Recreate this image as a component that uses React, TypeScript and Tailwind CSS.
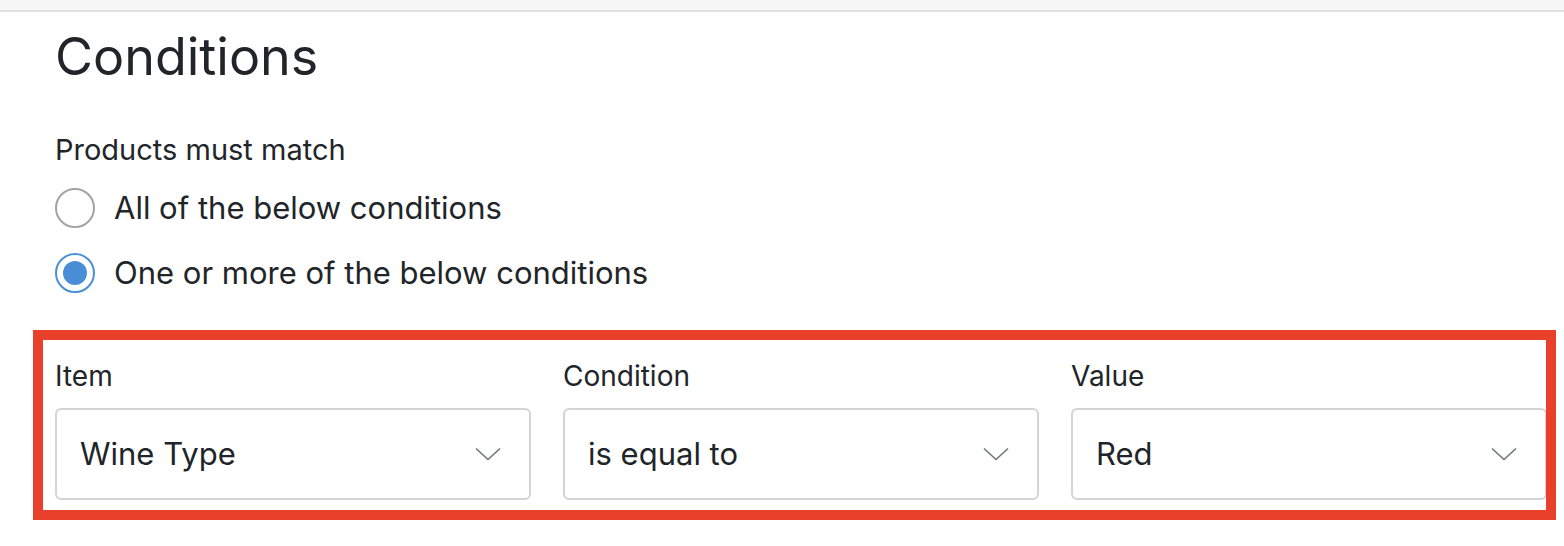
import React from 'react'

const font = { fontFamily: 'Inter, "Noto Sans", sans-serif' }

function Chevron() {
  return (
    <svg width="26" height="14" viewBox="0 0 26 14" fill="none" className="shrink-0">
      <path d="M1 1.5l12 11 12-11" stroke="#6f757b" strokeWidth="1.6" />
    </svg>
  )
}

function Select({ label, value }: { label: string; value: string }) {
  return (
    <div className="flex flex-col">
      <label className="text-[28px] leading-[34px] text-[#212529] mb-[15px]">{label}</label>
      <div className="h-[92px] border-2 border-[#d4d4d4] rounded-[6px] flex items-center justify-between pl-[23px] pr-[28px] bg-white">
        <span className="text-[31px] text-[#212529]">{value}</span>
        <Chevron />
      </div>
    </div>
  )
}

function Radio({ checked, label }: { checked?: boolean; label: string }) {
  return (
    <div className="flex items-center gap-[19px] h-[40px]">
      {checked ? (
        <span className="w-[40px] h-[40px] rounded-full border-2 border-[#4a8fd6] flex items-center justify-center">
          <span className="w-[24px] h-[24px] rounded-full bg-[#4a8fd6]" />
        </span>
      ) : (
        <span className="w-[40px] h-[40px] rounded-full border-2 border-[#a3a3a3]" />
      )}
      <span className="text-[31px] text-[#212529]">{label}</span>
    </div>
  )
}

export default function App() {
  return (
    <div className="min-h-screen bg-white relative" style={font}>
      <div className="h-[12px] bg-[#f7f7f7] border-b-2 border-[#e0e0e0]" />

      <div className="pl-[55px] pr-[17px]">
        <h1 className="text-[52px] leading-none text-[#212529] mt-[19px]">Conditions</h1>

        <p className="text-[29px] leading-[34px] text-[#212529] mt-[50px]">Products must match</p>

        <div className="mt-[21px] flex flex-col gap-[25px]">
          <Radio label="All of the below conditions" />
          <Radio checked label="One or more of the below conditions" />
        </div>

        <div className="grid grid-cols-3 gap-[32px] mt-[66px]">
          <Select label="Item" value="Wine Type" />
          <Select label="Condition" value="is equal to" />
          <Select label="Value" value="Red" />
        </div>
      </div>

      {/* annotation box */}
      <div className="absolute left-[33px] top-[330px] w-[1523px] h-[190px] border-[10px] border-[#e8402a] pointer-events-none" />
    </div>
  )
}
